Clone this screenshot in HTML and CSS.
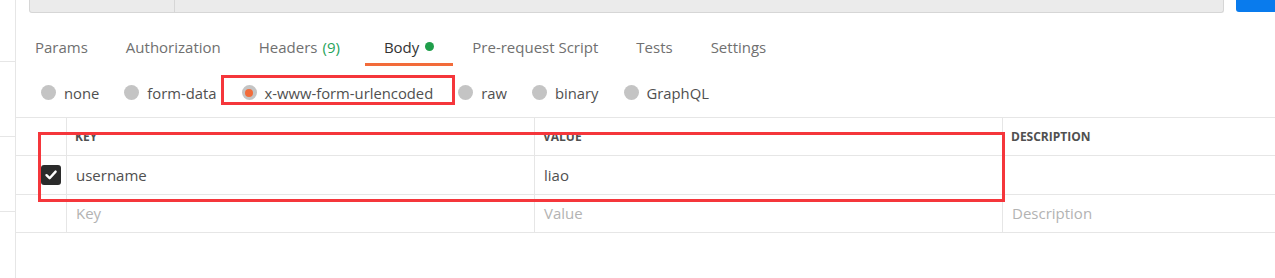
FILE: index.html
```html
<!DOCTYPE html>
<html lang="en">

<head>
    <meta charset="UTF-8">
    <meta name="viewport" content="width=device-width, initial-scale=1.0">
    <title>Request Body</title>
    <link rel="stylesheet" href="styles.css">
</head>

<body>
    <div class="page">
        <div class="sidebar">
            <div class="side-item first"></div>
            <div class="side-item"></div>
            <div class="side-item"></div>
        </div>

        <div class="main">
            <div class="url-row">
                <div class="url-bar">
                    <div class="method"></div>
                    <div class="url"></div>
                </div>
                <div class="send"></div>
            </div>

            <div class="tabs">
                <div class="tab">Params</div>
                <div class="tab">Authorization</div>
                <div class="tab">Headers <span class="count">(9)</span></div>
                <div class="tab active">Body <span class="dot"></span></div>
                <div class="tab">Pre-request Script</div>
                <div class="tab">Tests</div>
                <div class="tab">Settings</div>
            </div>

            <div class="body-types">
                <label class="radio"><span class="circle"></span>none</label>
                <label class="radio"><span class="circle"></span>form-data</label>
                <label class="radio"><span class="circle checked"></span>x-www-form-urlencoded</label>
                <label class="radio"><span class="circle"></span>raw</label>
                <label class="radio"><span class="circle"></span>binary</label>
                <label class="radio"><span class="circle"></span>GraphQL</label>
            </div>

            <div class="kv-table">
                <div class="cell head"></div>
                <div class="cell head">KEY</div>
                <div class="cell head">VALUE</div>
                <div class="cell head">DESCRIPTION</div>

                <div class="cell row check-cell">
                    <span class="checkbox">
                        <svg width="14" height="14" viewBox="0 0 14 14">
                            <path d="M2.5 7.2 L5.6 10.2 L11.6 3.6" fill="none" stroke="#fff" stroke-width="2.4"
                                stroke-linecap="round" stroke-linejoin="round" />
                        </svg>
                    </span>
                </div>
                <div class="cell row">username</div>
                <div class="cell row">liao</div>
                <div class="cell row"></div>

                <div class="cell"></div>
                <div class="cell placeholder">Key</div>
                <div class="cell placeholder">Value</div>
                <div class="cell placeholder">Description</div>
            </div>

            <!-- annotation boxes -->
            <div class="mark mark-type"></div>
            <div class="mark mark-row"></div>
        </div>
    </div>
</body>

</html>
```

FILE: styles.css
```css
/* page */
body {
    margin: 0;
    padding: 0;
    background: #fff;
    font-family: 'Open Sans', 'Noto Sans', Arial, sans-serif;
    color: #505050;
    overflow: hidden;
}

.page {
    display: flex;
    height: 278px;
}

/* left strip */
.sidebar {
    width: 15px;
    border-right: 1px solid #e6e6e6;
    flex-shrink: 0;
}

.side-item {
    height: 74px;
    border-bottom: 1px solid #e6e6e6;
}

.side-item.first {
    height: 61px;
}

.main {
    flex: 1;
    position: relative;
}

/* url bar */
.url-row {
    display: flex;
    height: 13px;
}

.url-bar {
    display: flex;
    margin-left: 13px;
    width: 1193px;
    height: 12px;
    background: #ebebeb;
    border: 1px solid #d6d6d6;
    border-top: none;
    border-radius: 0 0 3px 3px;
}

.method {
    width: 144px;
    border-right: 1px solid #d6d6d6;
}

.url {
    flex: 1;
}

.send {
    margin-left: 12px;
    flex: 1;
    height: 12px;
    background: #097bed;
    border-radius: 0 0 0 3px;
}

/* tabs */
.tabs {
    display: flex;
    margin-top: 15px;
}

.tab {
    box-sizing: border-box;
    padding: 2px 19px 0;
    height: 38px;
    font-size: 15px;
    color: #707070;
    border-bottom: 3px solid transparent;
    white-space: nowrap;
    display: flex;
    align-items: center;
}

.tab .count {
    color: #26a35a;
    margin-left: 5px;
    margin-right: 6px;
}

.tab.active {
    color: #333;
    border-bottom-color: #f26b3a;
}

.dot {
    display: inline-block;
    width: 9px;
    height: 9px;
    border-radius: 50%;
    background: #1f9e4a;
    margin-left: 6px;
}

/* body type radios */
.body-types {
    box-sizing: border-box;
    display: flex;
    gap: 25px;
    padding: 2px 0 0 25px;
    height: 51px;
    align-items: center;
}

.radio {
    display: flex;
    align-items: center;
    gap: 8px;
    font-size: 14.8px;
    color: #505050;
    white-space: nowrap;
}

.circle {
    width: 15px;
    height: 15px;
    border-radius: 50%;
    background: #c4c4c4;
    display: flex;
    align-items: center;
    justify-content: center;
}

.circle.checked::after {
    content: '';
    width: 8px;
    height: 8px;
    border-radius: 50%;
    background: #f26b3a;
}

/* key / value table */
.kv-table {
    display: grid;
    grid-template-columns: 51px 468px 468px 1fr;
    border-top: 1px solid #e6e6e6;
}

.cell {
    box-sizing: border-box;
    height: 38px;
    border-right: 1px solid #e6e6e6;
    border-bottom: 1px solid #e6e6e6;
    padding-left: 9px;
    display: flex;
    align-items: center;
    font-size: 15px;
    color: #505050;
}

.cell:nth-child(4n) {
    border-right: none;
}

.cell.head {
    font-size: 12px;
    font-weight: bold;
    color: #505050;
    padding-left: 8px;
}

.cell.row {
    height: 39px;
    padding-bottom: 1px;
}

.check-cell {
    padding-left: 25px;
}

.checkbox {
    width: 20px;
    height: 20px;
    border-radius: 3px;
    background: #2b2b2b;
    display: flex;
    align-items: center;
    justify-content: center;
}

.placeholder {
    color: #b3b3b3;
    padding-bottom: 1px;
}

/* red annotation boxes drawn over the screenshot */
.mark {
    position: absolute;
    border: 3px solid #f5363b;
    box-sizing: border-box;
}

.mark-type {
    left: 205px;
    top: 75px;
    width: 234px;
    height: 30px;
}

.mark-row {
    left: 22px;
    top: 132px;
    width: 967px;
    height: 70px;
}
```
